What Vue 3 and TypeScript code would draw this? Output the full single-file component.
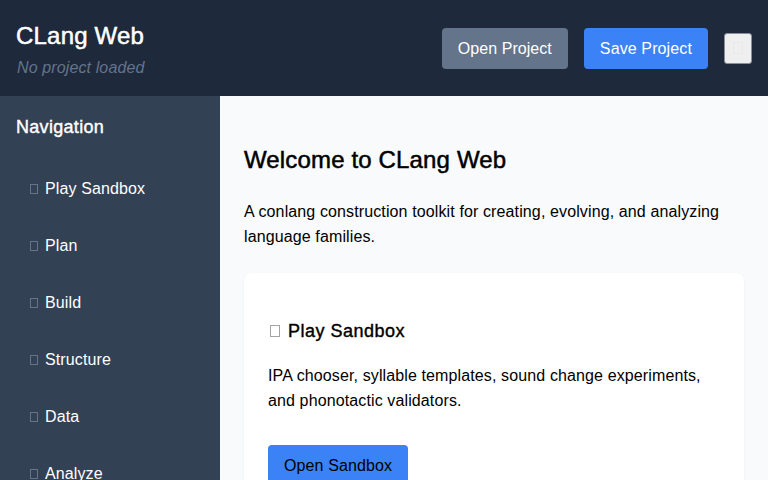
<script setup lang="ts">
const navItems = ["Play Sandbox", "Plan", "Build", "Structure", "Data", "Analyze"];
</script>

<template>
  <div class="app-shell">
    <header class="app-header">
      <div class="brand">
        <h1>CLang Web</h1>
        <span class="project-name">No project loaded</span>
      </div>
      <div class="header-actions">
        <button class="btn btn-secondary">Open Project</button>
        <button class="btn btn-primary">Save Project</button>
        <button class="theme-toggle"><span class="tofu" /></button>
      </div>
    </header>
    <div class="app-body">
      <nav class="sidebar">
        <h2>Navigation</h2>
        <ul>
          <li v-for="item in navItems" :key="item">
            <span class="tofu" />
            <span>{{ item }}</span>
          </li>
        </ul>
      </nav>
      <main class="content">
        <h2>Welcome to CLang Web</h2>
        <p class="intro">
          A conlang construction toolkit for creating, evolving, and analyzing language families.
        </p>
        <section class="card">
          <h3><span class="tofu" />Play Sandbox</h3>
          <p>IPA chooser, syllable templates, sound change experiments, and phonotactic validators.</p>
          <button class="card-btn">Open Sandbox</button>
        </section>
      </main>
    </div>
  </div>
</template>

<style>
html,
body {
  margin: 0;
  overflow: hidden;
}
</style>

<style scoped>
.app-shell {
  width: 768px;
  height: 480px;
  overflow: hidden;
  display: flex;
  flex-direction: column;
  font-family: "Liberation Sans", Arial, sans-serif;
  font-size: 16px;
  line-height: 25px;
  letter-spacing: 0.12px;
}

/* stand-in for the missing-glyph box where the emoji did not render */
.tofu {
  display: inline-block;
  flex: none;
  box-sizing: border-box;
  width: 8px;
  height: 10px;
  border: 1px solid #64748b;
}

.app-header {
  height: 96px;
  flex: none;
  box-sizing: border-box;
  padding: 16px;
  display: flex;
  align-items: center;
  justify-content: space-between;
  background: #1e293b;
  color: #fff;
}

.brand h1 {
  margin: 0;
  font-size: 24px;
  line-height: 38px;
  font-weight: 400;
  letter-spacing: 0.2px;
  -webkit-text-stroke: 0.5px #fff;
}

.project-name {
  display: block;
  margin-left: 1px;
  font-style: italic;
  color: #64748b;
}

.header-actions {
  display: flex;
  align-items: center;
  gap: 16px;
}

.btn {
  border: none;
  border-radius: 4px;
  padding: 8px 16px;
  color: #fff;
  font: inherit;
  letter-spacing: inherit;
}

.btn-secondary {
  background: #64748b;
  letter-spacing: 0.05px;
}

.btn-primary {
  background: #3b82f6;
}

.theme-toggle {
  width: 28px;
  height: 31px;
  padding: 0;
  display: flex;
  align-items: center;
  justify-content: center;
  border: 1px solid #8a8f98;
  border-radius: 3px;
  background: #efefef;
}

.theme-toggle .tofu {
  width: 10px;
  height: 12px;
  border-color: #e9e9e9;
}

.app-body {
  flex: 1;
  min-height: 0;
  display: flex;
}

.sidebar {
  width: 220px;
  flex: none;
  box-sizing: border-box;
  padding: 16px;
  background: #334155;
  color: #fff;
}

.sidebar h2 {
  margin: 0 0 25px;
  font-size: 18px;
  line-height: 31px;
  font-weight: 400;
  letter-spacing: 0.3px;
  -webkit-text-stroke: 0.4px #fff;
}

.sidebar ul {
  list-style: none;
  margin: 0;
  padding: 0;
  display: flex;
  flex-direction: column;
  gap: 16px;
}

.sidebar li {
  padding: 8px 14px;
  display: flex;
  align-items: center;
  gap: 7px;
}

.content {
  flex: 1;
  min-width: 0;
  box-sizing: border-box;
  padding: 48px 24px 0;
  background: #f8fafc;
}

.content h2 {
  margin: 0 0 23px;
  font-size: 24px;
  line-height: 32px;
  font-weight: 400;
  letter-spacing: 0.15px;
  color: #000;
  -webkit-text-stroke: 0.5px #000;
}

.intro {
  margin: 0 0 24px;
}

.card {
  background: #fff;
  border-radius: 8px;
  padding: 44px 24px 24px;
  box-shadow: 0 1px 3px rgba(0, 0, 0, 0.05);
}

.card h3 {
  margin: 0 0 18px;
  font-size: 18px;
  line-height: 28px;
  font-weight: 400;
  letter-spacing: 0.5px;
  -webkit-text-stroke: 0.4px #000;
  display: flex;
  align-items: center;
  gap: 8px;
}

.card h3 .tofu {
  width: 10px;
  height: 12px;
  margin-left: 2px;
  border-color: #a3a3a3;
}

.card p {
  margin: 0 0 32px;
}

.card-btn {
  border: none;
  border-radius: 4px;
  padding: 8px 16px;
  background: #3b82f6;
  color: #000;
  font: inherit;
  letter-spacing: inherit;
}
</style>
